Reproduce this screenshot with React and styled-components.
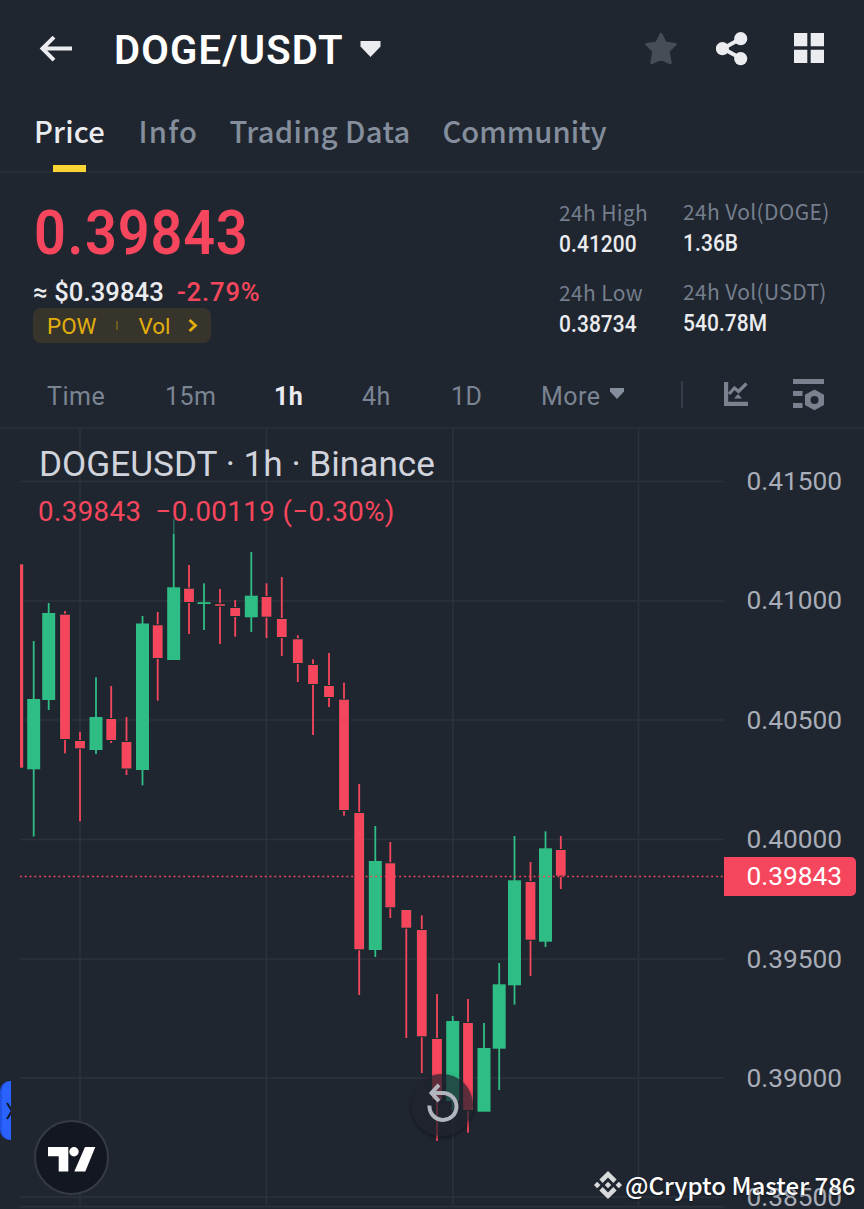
import React from "react";
import styled, { createGlobalStyle } from "styled-components";

const UP = "#2ebd85";
const DOWN = "#f6465d";

const CHART_TOP = 429;

const gridRows = [481.5, 601, 720, 839.5, 959, 1078, 1197];
const gridCols = [80, 266.5, 453, 638.5];
const axisPrices = ["0.41500", "0.41000", "0.40500", "0.40000", "0.39500", "0.39000", "0.38500"];

// [center x, body top, body bottom, wick top, wick bottom, rising]
const candles = [
  [33.7, 699, 769.3, 641, 836.5, 1],
  [48.7, 613, 700, 603, 710, 1],
  [65, 614.7, 739, 611, 753.3, 0],
  [80, 741, 748.3, 732, 821.3, 0],
  [96, 717, 750, 677.3, 754, 1],
  [111.2, 719, 740, 686, 743, 0],
  [126.5, 742, 768.5, 717, 775, 0],
  [142.5, 623.5, 770, 616, 785.3, 1],
  [157.7, 625.3, 658, 612, 700.7, 0],
  [173.7, 587.3, 660, 534, 640, 1],
  [189, 588.7, 602, 565, 634, 0],
  [204, 602.2, 604, 583.3, 630, 1],
  [220, 604.2, 605.8, 589, 644, 0],
  [235.2, 608, 616, 600, 636.7, 0],
  [251.3, 595.7, 617.3, 552, 632, 1],
  [266.5, 597, 616.7, 583.3, 638, 0],
  [281.8, 619, 637, 577, 656, 0],
  [297.8, 639.3, 663, 635.3, 682, 0],
  [313, 665, 684, 659.3, 735, 0],
  [329, 686, 697, 653, 707, 0],
  [344, 699.7, 810, 682.7, 815.7, 0],
  [359.2, 813, 949.3, 784, 995, 0],
  [375.3, 861, 950, 826, 957, 1],
  [390.3, 863.3, 907.3, 842, 918, 0],
  [406.3, 910, 927.7, 909, 1038, 0],
  [421.8, 930, 1036.3, 915.3, 1073, 0],
  [437, 1039, 1099.3, 994, 1141, 0],
  [452.7, 1021, 1101, 1016, 1110, 1],
  [468, 1023, 1110, 999, 1132.7, 0],
  [484, 1048, 1111.7, 1023, 1111, 1],
  [499.2, 984.3, 1048.7, 963, 1090, 1],
  [514.5, 880.3, 985.3, 836, 1004.7, 1],
  [530.5, 882, 939.7, 862, 976, 0],
  [545.5, 848.3, 941.7, 831.3, 947, 1],
  [560.8, 850, 875.7, 836, 889, 0],
];

const stats = [
  ["24h High", "0.41200", "24h Vol(DOGE)", "1.36B"],
  ["24h Low", "0.38734", "24h Vol(USDT)", "540.78M"],
];

const Candle = ({ data }) => {
  const [x, top, bottom, high, low, rising] = data;
  const width = rising ? 13 : 9.8;
  return (
    <g>
      <rect x={x - 0.9} y={high} width={1.8} height={low - high} fill={rising ? UP : DOWN} />
      {!rising && (
        <rect x={x - 5.9} y={top - 1} width={11.8} height={bottom - top + 2} fill="#0d302f" />
      )}
      <rect x={x - width / 2} y={top} width={width} height={bottom - top} fill={rising ? UP : DOWN} />
    </g>
  );
};

const Plot = () => (
  <PlotSvg viewBox={`0 ${CHART_TOP} 724 780`}>
    <g stroke="#2c323c" strokeWidth="1.6">
      {gridRows.map((y) => (
        <line key={y} x1="20" x2="724" y1={y} y2={y} />
      ))}
      {gridCols.map((x) => (
        <line key={x} x1={x} x2={x} y1="429" y2="1206" />
      ))}
      <line x1="20" x2="724" y1="1206.7" y2="1206.7" />
    </g>
    <rect x="20" y="563" width="4.4" height="206" fill="#0d302f" />
    <rect x="20" y="564.3" width="3.2" height="203.4" fill={DOWN} />
    <rect x="173" y="519" width="1.6" height="15" fill={UP} opacity="0.45" />
    {candles.map((c) => (
      <Candle key={c[0]} data={c} />
    ))}
    <line x1="20" x2="724" y1="876.5" y2="876.5" stroke={DOWN} strokeWidth="1.6" strokeDasharray="1.8 3" />
  </PlotSvg>
);

const Header = () => (
  <HeaderBar>
    <svg width="34" height="28" viewBox="0 0 34 28" fill="none" stroke="#eaecef" strokeWidth="4">
      <path d="M33 13.6H4M15 2.1L3.5 13.6L15 25.1" />
    </svg>
    <Pair>DOGE/USDT</Pair>
    <svg width="21" height="16" viewBox="0 0 21 16" fill="#eaecef">
      <path d="M0.5 0H20.5V5.5L10.5 16L0.5 5.5Z" />
    </svg>
    <Actions>
      <svg width="34" height="34" viewBox="0 0.5 34 34" fill="#474d57" stroke="#474d57" strokeWidth="2.5" strokeLinejoin="round">
        <path d="M17 2.5L21.4 11.3L31.5 12.7L24.4 20L26.5 31.5L17 27L7.5 31.5L9.6 20L2.5 12.7L12.6 11.3Z" />
      </svg>
      <svg width="32" height="34" viewBox="0 0.4 32 34" fill="#eaecef">
        <path d="M7 17L25 7M7 17L25 27" stroke="#eaecef" strokeWidth="4" />
        <circle cx="6.4" cy="17" r="6.6" />
        <circle cx="24.7" cy="7.1" r="6.6" />
        <circle cx="24.7" cy="27" r="6.6" />
      </svg>
      <svg width="30" height="31" viewBox="0 0 30 31" fill="#eaecef">
        <path d="M0 0H13.3V13.3H0ZM16.7 0H30V13.3H16.7ZM0 16.7H13.3V30H0ZM16.7 16.7H30V30H16.7Z" />
      </svg>
    </Actions>
  </HeaderBar>
);

const Tabs = () => (
  <TabBar>
    <Tab $active $width="104.5px" $spacing="0.15px">Price</Tab>
    <Tab $width="91px" $spacing="1.2px">Info</Tab>
    <Tab $width="213px" $spacing="0.35px">Trading Data</Tab>
    <Tab $width="170px">Community</Tab>
  </TabBar>
);

const Summary = () => (
  <SummaryRow>
    <PriceBlock>
      <LastPrice>
        0<Point>.</Point>39843
      </LastPrice>
      <SubPrice>
        <span>≈ $0.39843</span>
        <Change>-2.79%</Change>
      </SubPrice>
      <TagPill>
        <span>POW</span>
        <TagDivider />
        <span>Vol</span>
        <svg width="10" height="13" viewBox="0 0 10 13" fill="none" stroke="#e2ae0c" strokeWidth="2.8">
          <path d="M1.5 1L7.5 6.5L1.5 12" />
        </svg>
      </TagPill>
    </PriceBlock>
    <StatsGrid>
      {stats.map(([labelA, valueA, labelB, valueB]) => (
        <React.Fragment key={labelA}>
          <Stat>
            <StatLabel>{labelA}</StatLabel>
            <StatValue>{valueA}</StatValue>
          </Stat>
          <Stat $raised>
            <StatLabel>{labelB}</StatLabel>
            <StatValue>{valueB}</StatValue>
          </Stat>
        </React.Fragment>
      ))}
    </StatsGrid>
  </SummaryRow>
);

const Intervals = () => (
  <IntervalBar>
    <Interval $width="118px">Time</Interval>
    <Interval $width="109px">15m</Interval>
    <Interval $width="88px" $active>1h</Interval>
    <Interval $width="89px">4h</Interval>
    <Interval $width="90px">1D</Interval>
    <Interval $width="69px">More</Interval>
    <Caret width="14" height="11" viewBox="0 0 14 11" fill="#848e9c">
      <path d="M0 0H14V3.5L7 11L0 3.5Z" />
    </Caret>
    <IntervalDivider />
    <ChartIcon width="24" height="24" viewBox="0 0 24 24" fill="#7a8290">
      <path d="M0 0H4.2V19.8H24V24H0Z" />
      <path d="M5 12L10.5 6L14.5 9.5L22.5 1.5" fill="none" stroke="#7a8290" strokeWidth="3.2" />
      <path d="M14 12L18 16.5H10Z" />
    </ChartIcon>
    <svg width="31" height="32" viewBox="0 0 31 32" fill="#7a8290">
      <path d="M0 0H31V5H0ZM0 12H9.5V17H0ZM0 24H9.5V29H0Z" />
      <path fillRule="evenodd" d="M21.5 10.5L31 15.8V26L21.5 31.3L12 26V15.8ZM21.5 17A4 4 0 1 0 21.5 25A4 4 0 1 0 21.5 17Z" />
    </svg>
  </IntervalBar>
);

const Chart = () => (
  <ChartArea>
    <Plot />
    <Axis>
      {axisPrices.map((p) => (
        <AxisLabel key={p}>{p}</AxisLabel>
      ))}
      <PriceTag>0.39843</PriceTag>
    </Axis>
    <Legend>
      <LegendTitle>DOGEUSDT · 1h · Binance</LegendTitle>
      <LegendValues>
        <span>0.39843</span>
        <span>−0.00119 (−0.30%)</span>
      </LegendValues>
    </Legend>
    <DrawerHandle>
      <svg width="5" height="18" viewBox="0 0 5 18" fill="none" stroke="#131722" strokeWidth="2">
        <path d="M1 1L6 9L1 17" />
      </svg>
    </DrawerHandle>
    <ChartBadge>
      <svg width="48" height="25" viewBox="0 0 48 25" fill="#fff">
        <path d="M0 0H20.3V24.5H10.7V9.3H0ZM37 0H47.3L37.3 24.5H26.3Z" />
        <circle cx="26" cy="4.7" r="4.7" />
      </svg>
    </ChartBadge>
    <ResetButton aria-label="Reset chart">
      <svg width="32" height="40" viewBox="0 0 32 40" fill="none" stroke="#b2b5be" strokeWidth="4">
        <path d="M2.5 22.5A13.5 13.5 0 1 0 16 10H5M12 1.8L4.5 10L12 18.2" />
      </svg>
    </ResetButton>
    <Watermark>
      <svg width="28" height="28" viewBox="0 0 28 28" fill="#d9dadc">
        <path d="M14 0L22.6 8.6L19.3 11.9L14 6.6L8.7 11.9L5.4 8.6ZM14 28L5.4 19.4L8.7 16.1L14 21.4L19.3 16.1L22.6 19.4Z" />
        <path d="M14 10.8L17.2 14L14 17.2L10.8 14ZM3.2 10.8L6.4 14L3.2 17.2L0 14ZM24.8 10.8L28 14L24.8 17.2L21.6 14Z" />
      </svg>
      <span>@Crypto Master 786</span>
    </Watermark>
  </ChartArea>
);

const App = () => (
  <>
    <GlobalStyle />
    <Page>
      <Header />
      <Tabs />
      <Summary />
      <Intervals />
      <Chart />
    </Page>
  </>
);

export default App;

const GlobalStyle = createGlobalStyle`
  * {
    box-sizing: border-box;
  }
  body {
    margin: 0;
    background: #202630;
  }
`;

const Page = styled.div`
  width: 864px;
  height: 1209px;
  overflow: hidden;
  background: #202630;
  color: #eaecef;
  font-family: Roboto, "Liberation Sans", sans-serif;
  white-space: nowrap;
  svg {
    display: block;
    flex: none;
  }
`;

const HeaderBar = styled.header`
  display: flex;
  align-items: center;
  height: 97px;
  padding: 0 40px 0 39px;
`;

const Pair = styled.h1`
  margin: 5px 14px 0 41px;
  width: 232px;
  font-size: 40px;
  font-weight: 600;
  line-height: 48px;
  letter-spacing: 1.2px;
  color: #fff;
`;

const Actions = styled.div`
  display: flex;
  align-items: center;
  margin-left: auto;
  gap: 38px;
  svg:last-child {
    margin-left: 8px;
  }
`;

const TabBar = styled.nav`
  display: flex;
  height: 76px;
  padding-left: 34px;
  border-bottom: 2px solid #272d37;
`;

const Tab = styled.div`
  width: ${(props) => props.$width};
  font-family: "Noto Sans CJK SC", "Noto Sans", sans-serif;
  font-size: 29.2px;
  font-weight: 500;
  line-height: 67px;
  letter-spacing: ${(props) => props.$spacing || "0"};
  color: ${(props) => (props.$active ? "#eaecef" : "#848e9c")};
  &::after {
    content: "";
    display: ${(props) => (props.$active ? "block" : "none")};
    width: 33px;
    height: 7px;
    margin: 1px 0 0 19px;
    background: #fcd535;
  }
`;

const SummaryRow = styled.section`
  display: flex;
  height: 190px;
  padding: 26px 0 0 33px;
`;

const PriceBlock = styled.div`
  width: 526px;
`;

const LastPrice = styled.div`
  height: 77px;
  padding-left: 1px;
  font-size: 62px;
  font-weight: 600;
  line-height: 68px;
  letter-spacing: 0.9px;
  color: ${DOWN};
  transform: scaleX(0.9);
  transform-origin: left;
`;

const Point = styled.span`
  margin: 0 1px;
`;

const SubPrice = styled.div`
  display: flex;
  gap: 13px;
  font-size: 25.6px;
  font-weight: 500;
  line-height: 32px;
  letter-spacing: 0.1px;
`;

const Change = styled.span`
  letter-spacing: 0.9px;
  color: ${DOWN};
`;

const TagPill = styled.div`
  display: flex;
  align-items: center;
  width: 178px;
  height: 35px;
  padding: 0 13px 0 14px;
  border-radius: 8px;
  background: #37342c;
  color: #e2ae0c;
  font-size: 22.4px;
  svg {
    margin-left: auto;
  }
`;

const TagDivider = styled.i`
  width: 2px;
  height: 9px;
  margin: 0 20px;
  background: #6b5a22;
`;

const StatsGrid = styled.div`
  display: grid;
  grid-template-columns: 124px auto;
  grid-auto-rows: 80px;
  align-content: start;
  margin-top: -3px;
`;

const Stat = styled.div`
  padding-top: ${(props) => (props.$raised ? "0" : "1px")};
`;

const StatLabel = styled.div`
  height: 32px;
  font-family: "Noto Sans CJK SC", "Noto Sans", sans-serif;
  font-size: 21px;
  line-height: 30px;
  letter-spacing: 0.35px;
  color: #757e8d;
`;

const StatValue = styled.div`
  font-size: 23px;
  font-weight: 500;
  line-height: 32px;
  letter-spacing: 0.1px;
  transform: scaleX(0.91);
  transform-origin: left;
`;

const IntervalBar = styled.div`
  display: flex;
  align-items: center;
  height: 66px;
  padding-left: 47px;
  border-bottom: 2px solid #272d37;
`;

const Interval = styled.div`
  width: ${(props) => props.$width};
  padding-top: 3px;
  font-size: 25px;
  font-weight: ${(props) => (props.$active ? 700 : 400)};
  line-height: 32px;
  letter-spacing: 0.5px;
  color: ${(props) => (props.$active ? "#eaecef" : "#7b8492")};
`;

const Caret = styled.svg`
  margin-top: -4px;
`;

const IntervalDivider = styled.i`
  width: 2px;
  height: 27px;
  margin: -2px 41px 0 57px;
  background: #373d48;
`;

const ChartIcon = styled.svg`
  margin: -2px 45px 0 0;
`;

const ChartArea = styled.main`
  position: relative;
  display: flex;
  height: 780px;
`;

const PlotSvg = styled.svg`
  width: 724px;
  height: 780px;
`;

const Axis = styled.div`
  position: relative;
  width: 140px;
  height: 777px;
  overflow: hidden;
`;

const AxisLabel = styled.div`
  height: 119.4px;
  padding-left: 22.5px;
  font-size: 26.3px;
  line-height: 105px;
  color: #a9adb7;
`;

const PriceTag = styled.div`
  position: absolute;
  top: 428px;
  left: 0;
  width: 132px;
  height: 39px;
  padding-left: 22.5px;
  border-radius: 0 5px 5px 0;
  background: ${DOWN};
  color: #fff;
  font-size: 26.3px;
  line-height: 39px;
`;

const Legend = styled.div`
  position: absolute;
  top: 13px;
  left: 38px;
`;

const LegendTitle = styled.div`
  padding-left: 1px;
  font-size: 35.2px;
  line-height: 44px;
  color: #d1d4dc;
`;

const LegendValues = styled.div`
  display: flex;
  gap: 14px;
  margin-top: 8px;
  font-size: 27.6px;
  line-height: 36px;
  letter-spacing: 0.45px;
  color: ${DOWN};
`;

const DrawerHandle = styled.div`
  position: absolute;
  top: 652px;
  left: 0;
  display: flex;
  align-items: center;
  justify-content: flex-end;
  width: 11px;
  height: 59px;
  border-left: 2px solid #1e53e5;
  border-radius: 10px 0 0 10px;
  background: #2962ff;
`;

const ChartBadge = styled.div`
  position: absolute;
  top: 691px;
  left: 34px;
  display: flex;
  align-items: center;
  justify-content: center;
  width: 75px;
  height: 75px;
  padding: 3px 0 0 1px;
  border: 2px solid #363a45;
  border-radius: 50%;
  background: #131722;
`;

const ResetButton = styled.button`
  position: absolute;
  top: 645px;
  left: 411px;
  display: flex;
  align-items: center;
  justify-content: center;
  width: 62px;
  height: 62px;
  padding: 0 0 4px 1px;
  border: none;
  border-radius: 50%;
  background: rgba(30, 34, 45, 0.7);
  box-shadow: 0 2px 4px rgba(0, 0, 0, 0.4);
`;

const Watermark = styled.div`
  position: absolute;
  top: 738px;
  left: 594px;
  display: flex;
  align-items: center;
  gap: 3px;
  font-family: "Noto Sans CJK SC", "Noto Sans", sans-serif;
  font-size: 24.1px;
  font-weight: 500;
  line-height: 35px;
  color: #fff;
  text-shadow: 0 1px 2px rgba(0, 0, 0, 0.5);
`;
